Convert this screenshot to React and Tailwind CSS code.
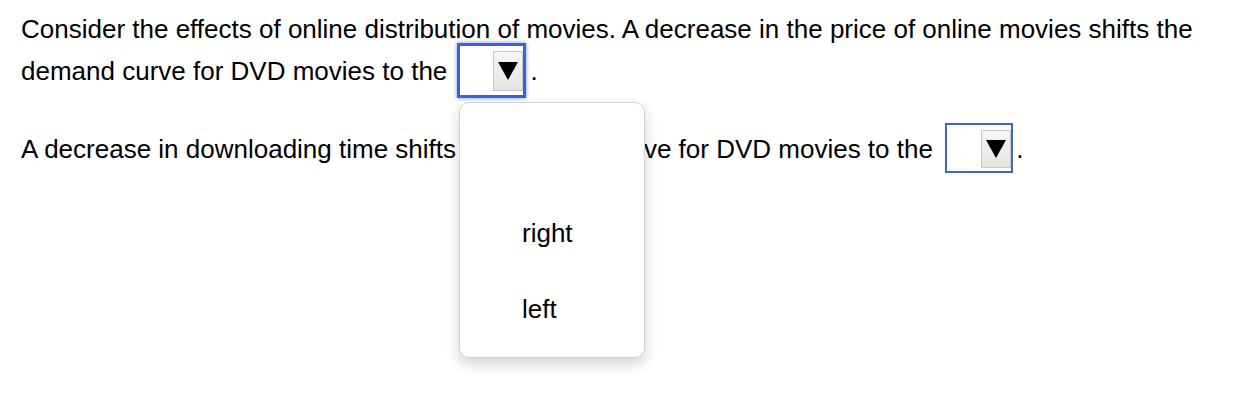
import React from "react";

function Arrow({ h }) {
  return (
    <span
      className={`flex w-[30px] ${h} items-center justify-center border border-[#c9c9c9] bg-gradient-to-b from-[#f7f7f7] to-[#e4e4e4]`}
    >
      <svg width="20" height="18" viewBox="0 0 20 18">
        <polygon points="0,0 20,0 10,18" fill="#000" />
      </svg>
    </span>
  );
}

export default function App() {
  return (
    <div
      className="relative h-[420px] w-[1242px] bg-white pl-[21px] pt-[8px] text-[26px] leading-[42px] text-black"
      style={{ fontFamily: '"Liberation Sans", Arial, sans-serif' }}
    >
      {/* first question */}
      <p className="w-[1200px]">
        Consider the effects of online distribution of movies. A decrease in the price of online movies shifts the demand
        curve for DVD movies to the{" "}
        <span className="mb-[-6px] ml-[2px] mt-[-7px] inline-block h-[55px] w-[69px] overflow-hidden border-[3px] border-[#3d60d4] bg-white align-[-12px] shadow-[0_0_4px_rgba(61,96,212,0.7)]">
          <span className="flex h-full items-center justify-end">
            <Arrow h="h-[40px]" />
          </span>
        </span>
        <span className="ml-[5px]">.</span>
      </p>

      {/* second question */}
      <p className="mt-[36px] w-[1200px]">
        A decrease in downloading time shifts the demand curve for DVD movies to the{" "}
        <span className="mb-[-3px] ml-[5px] mt-[-5px] inline-block h-[50px] w-[68px] overflow-hidden border-2 border-[#3f66c8] bg-white align-[-12px]">
          <span className="flex h-full items-center justify-end pt-[2px]">
            <Arrow h="h-[38px]" />
          </span>
        </span>
        <span className="ml-[3px]">.</span>
      </p>

      {/* open menu for the first select */}
      <div className="absolute left-[459px] top-[102px] z-10 h-[256px] w-[186px] rounded-[10px] border border-[#d3d3d3] bg-white pb-[10px] pl-[62px] pt-[92px] leading-[76px] shadow-[0_6px_14px_rgba(0,0,0,0.18)]">
        <div>right</div>
        <div>left</div>
      </div>
    </div>
  );
}
